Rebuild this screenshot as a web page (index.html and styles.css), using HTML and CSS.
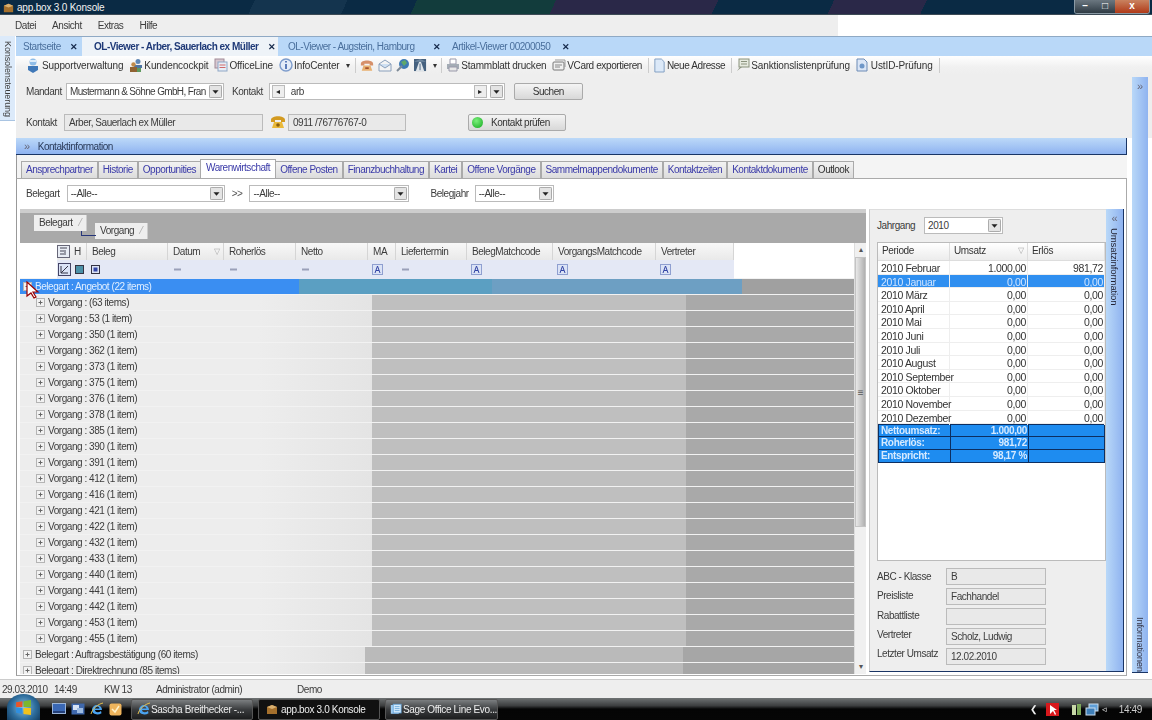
FILE: index.html
```html
<!doctype html>
<html lang="de">
<head>
  <meta charset="UTF-8">
  <title>app.box 3.0 Konsole</title>
  <link rel="stylesheet" href="styles.css">
</head>
<body>
  <svg class="defs" width="0" height="0">
    <symbol id="box" viewBox="0 0 14 14"><path d="M2 5l5-2 5 2v7H2z" fill="#a5702c"/><path d="M2 5l5 2 5-2-5-2z" fill="#d9b070"/></symbol>
    <symbol id="plus" viewBox="0 0 9 9"><rect x=".5" y=".5" width="8" height="8" fill="#f2f2f2" stroke="#b4b4b4"/><path d="M2.500 4.500h4M4.500 2.500v4" stroke="#666"/></symbol>
    <symbol id="down" viewBox="0 0 15 15"><rect x=".5" y=".5" width="14" height="14" rx="1" fill="#e4e4e4" stroke="#9a9a9a"/><path d="M4 6h7l-3.500 4z" fill="#222"/></symbol>
    <symbol id="filter-a" viewBox="0 0 11 11"><rect x=".5" y=".5" width="10" height="10" fill="#dbe3f6" stroke="#8f9fd0"/><path d="M3 9l2.500-7L8 9M4 6.500h3" fill="none" stroke="#3345a5"/></symbol>
    <symbol id="filter-eq" viewBox="0 0 11 11"><path d="M2 4.500h7v2H2z" fill="#9aa0b8"/></symbol>
    <symbol id="phone" viewBox="0 0 16 14"><path d="M1 5c0-5 14-5 14 0v2h-4V5H5v2H1z" fill="#d39a20"/><path d="M4 7h8l2 6H2z" fill="#eab93a"/><circle cx="8" cy="10" r="1.800" fill="#8a5f10"/></symbol>
    <symbol id="phone-red" viewBox="0 0 16 14"><path d="M1 5c0-5 14-5 14 0v2h-4V5H5v2H1z" fill="#d6906a"/><path d="M4 7h8l2 6H2z" fill="#e8b070"/><path d="M6 9h4v2H6z" fill="#a5502c"/></symbol>
    <symbol id="doc" viewBox="0 0 14 16"><path d="M2 1h7l3 3v11H2z" fill="#dce9f8" stroke="#7d9cc0"/></symbol>
    <symbol id="print" viewBox="0 0 14 14"><path d="M4 1h6v5H4z" fill="#fff" stroke="#99a"/><path d="M1 6h12v5H1z" fill="#a4acb5"/><path d="M3 9h8v4H3z" fill="#e8e8e8" stroke="#99a"/></symbol>
    <symbol id="support" viewBox="0 0 12 15"><circle cx="6" cy="4" r="3.500" fill="#8fbde8"/><path d="M1 8h10v4l-5 3-5-3z" fill="#3f78b8"/><path d="M3 2h6v2H3z" fill="#dcecfa"/></symbol>
    <symbol id="cockpit" viewBox="0 0 14 14"><circle cx="9" cy="3.500" r="2.500" fill="#5f86b5"/><path d="M5 7h8v3H5z" fill="#4c74a4"/><circle cx="4.500" cy="6.500" r="2.200" fill="#c08a4a"/><path d="M1 9h7v5H1z" fill="#8f6232"/><path d="M8 10h4v4H8z" fill="#5f9a5f"/></symbol>
    <symbol id="office" viewBox="0 0 14 14"><rect x="1" y="1" width="9" height="9" fill="#d9c8d0" stroke="#a08a98"/><rect x="4" y="4" width="9" height="9" fill="#e8eef6" stroke="#8fa7c6"/><path d="M5.500 7h6M5.500 9.500h6" stroke="#d06a6a"/></symbol>
    <symbol id="info" viewBox="0 0 14 14"><circle cx="7" cy="7" r="6" fill="#e4ecf8" stroke="#7d9ccc" stroke-width="1.400"/><path d="M7 3v1.500M7 6v5" stroke="#3a5fa8" stroke-width="1.600"/></symbol>
    <symbol id="mail" viewBox="0 0 14 13"><path d="M1 5l6-4 6 4v7H1z" fill="#f4f4f4" stroke="#8aa0bc"/><path d="M1 5l6 4 6-4" fill="#cfe0f2" stroke="#8aa0bc"/></symbol>
    <symbol id="globe" viewBox="0 0 14 14"><circle cx="8" cy="6" r="5" fill="#3d7ab5"/><path d="M5 4l4-2 2 3-3 3z" fill="#5fa86a"/><path d="M1 13l5-5" stroke="#7d8a96" stroke-width="2"/></symbol>
    <symbol id="road" viewBox="0 0 14 14"><rect width="13" height="13" fill="#45617f"/><path d="M5.500 3h2L11 13H2z" fill="#dfe5ea"/><path d="M6.500 5v7" stroke="#45617f"/><path d="M0 3l6.500-3L13 3" fill="#6f88a0"/></symbol>
    <symbol id="vcard" viewBox="0 0 14 12"><rect x="1" y="3" width="11" height="8" rx="1" fill="#efefef" stroke="#777"/><path d="M3 1h10v7" fill="none" stroke="#999"/><path d="M3 6h7M3 8h5" stroke="#888"/></symbol>
    <symbol id="speech" viewBox="0 0 14 14"><rect x="3" y="1" width="10" height="8" fill="#e6eadf" stroke="#8a927d"/><path d="M5 3.500h6M5 6h6" stroke="#8a927d"/><path d="M1 13l3-4h2z" fill="#8a927d"/></symbol>
    <symbol id="ust" viewBox="0 0 12 14"><path d="M1 1h7l3 3v9H1z" fill="#dbe6f6" stroke="#6c8bb5"/><circle cx="6" cy="8" r="2.500" fill="#6f97c8"/></symbol>
    <symbol id="ie" viewBox="0 0 14 14"><path d="M2 8a5 5 0 1 1 10 0H5c.3 2.500 3.500 3 6 1l.5 2.200C8 13.500 2 12.500 2 8zm3-1.500h4.500C9 3.800 5.500 3.800 5 6.500z" fill="#4aa3f0"/><path d="M1 12C2 7 8 2 13 1" fill="none" stroke="#e8c04a"/></symbol>
    <symbol id="screen" viewBox="0 0 14 12"><rect x=".5" y=".5" width="13" height="10" fill="#3a68b5" stroke="#9ab4d8"/><path d="M1 8h12v2H1z" fill="#233f78"/></symbol>
    <symbol id="windows" viewBox="0 0 14 12"><rect x=".5" y=".5" width="13" height="11" fill="#3f68ac"/><rect x="2" y="2" width="6" height="5" fill="#d7e3f4"/><rect x="6" y="5" width="6" height="5" fill="#9dbbe0"/></symbol>
    <symbol id="note" viewBox="0 0 13 13"><rect x=".5" y=".5" width="12" height="12" rx="2" fill="#eeb45c"/><path d="M3 6l3 3 4-6" fill="none" stroke="#fff1c8" stroke-width="1.500"/></symbol>
    <symbol id="sage" viewBox="0 0 15 14"><rect x="1" y="2" width="10" height="11" fill="#9fcdf2"/><rect x="4" y="1" width="10" height="11" fill="#d4ebfb" stroke="#5fa0d8"/><path d="M6 4h6M6 6.500h6M6 9h6" stroke="#5fa0d8"/></symbol>
    <symbol id="red-flag" viewBox="0 0 13 13"><rect width="13" height="13" fill="#d8181c"/><path d="M4 2v9l3-3 2 4 1-1-2-4h3z" fill="#fff"/></symbol>
    <symbol id="net" viewBox="0 0 14 13"><rect x="4" y="1" width="9" height="7" fill="#5f9fd8" stroke="#cde"/><rect x="1" y="5" width="9" height="7" fill="#3f7fb8" stroke="#cde"/></symbol>
    <symbol id="bat" viewBox="0 0 11 13"><rect x="1" y="2" width="4" height="10" fill="#c8d8a8"/><rect x="6" y="1" width="4" height="11" fill="#7da85a"/></symbol>
  </svg>

  <div class="titlebar">
    <svg class="title-icon" width="13" height="13"><use href="#box"/></svg>
    <span class="title-text">app.box 3.0 Konsole</span>
    <div class="win-btns">
      <span class="win-btn">&#8211;</span>
      <span class="win-btn">&#9633;</span>
      <span class="win-btn win-close">x</span>
    </div>
  </div>

  <div class="menubar">
    <div class="menu-items">
      <span>Datei</span><span>Ansicht</span><span>Extras</span><span>Hilfe</span>
    </div>
  </div>

  <div class="workspace">
    <div class="left-rail">
      <div class="rail-tab"><span>Konsolensteuerung</span></div>
    </div>

    <div class="center">
      <div class="doc-tabs">
        <div class="doc-tab dt-1"><span>Startseite</span><b>&#10005;</b></div>
        <div class="doc-tab dt-2 active"><span>OL-Viewer - Arber, Sauerlach ex Müller</span><b>&#10005;</b></div>
        <div class="doc-tab dt-3"><span>OL-Viewer - Augstein, Hamburg</span><b>&#10005;</b></div>
        <div class="doc-tab dt-4"><span>Artikel-Viewer 00200050</span><b>&#10005;</b></div>
      </div>

      <div class="toolbar">
        <span class="tool t-support"><svg width="12" height="15"><use href="#support"/></svg>Supportverwaltung</span>
        <span class="tool"><svg width="14" height="14"><use href="#cockpit"/></svg>Kundencockpit</span>
        <span class="tool"><svg width="14" height="14"><use href="#office"/></svg>OfficeLine</span>
        <span class="tool"><svg width="14" height="14"><use href="#info"/></svg>InfoCenter</span>
        <span class="caret">&#9662;</span>
        <span class="sep sep-tight"></span>
        <svg class="t-icon" width="14" height="13"><use href="#phone-red"/></svg>
        <svg class="t-icon" width="14" height="13"><use href="#mail"/></svg>
        <svg class="t-icon" width="14" height="14"><use href="#globe"/></svg>
        <svg class="t-icon" width="13" height="13"><use href="#road"/></svg>
        <span class="caret caret-2">&#9662;</span>
        <span class="sep"></span>
        <span class="tool t-print"><svg width="14" height="14"><use href="#print"/></svg>Stammblatt drucken</span>
        <span class="tool tool-narrow"><svg width="14" height="12"><use href="#vcard"/></svg>VCard exportieren</span>
        <span class="sep"></span>
        <span class="tool tool-narrow"><svg width="13" height="15"><use href="#doc"/></svg>Neue Adresse</span>
        <span class="sep"></span>
        <span class="tool"><svg width="14" height="14"><use href="#speech"/></svg>Sanktionslistenprüfung</span>
        <span class="tool t-ust"><svg width="12" height="14"><use href="#ust"/></svg>UstID-Prüfung</span>
        <span class="sep"></span>
      </div>

      <div class="form-area">
        <div class="form-row row-top">
          <span class="lbl lbl-mandant">Mandant</span>
          <div class="combo combo-mandant"><span>Mustermann &amp; Söhne GmbH, Fran</span><svg width="13" height="13"><use href="#down"/></svg></div>
          <span class="lbl lbl-kontakt">Kontakt</span>
          <div class="combo combo-kontakt">
            <span class="nav-btn">&#9666;</span>
            <span class="grow">arb</span>
            <span class="nav-btn">&#9656;</span>
            <svg width="13" height="13"><use href="#down"/></svg>
          </div>
          <button class="btn btn-suchen">Suchen</button>
        </div>
        <div class="form-row row-bottom">
          <span class="lbl lbl-kontakt2">Kontakt</span>
          <div class="field field-name">Arber, Sauerlach ex Müller</div>
          <svg class="phone" width="16" height="14"><use href="#phone"/></svg>
          <div class="field field-tel">0911 /76776767-0</div>
          <button class="btn btn-pruefen"><i class="led"></i>Kontakt prüfen</button>
        </div>
      </div>

      <div class="section-bar"><span class="chev">&#187;</span>Kontaktinformation</div>

      <div class="sub-tabs">
        <span class="sub-tab">Ansprechpartner</span>
        <span class="sub-tab">Historie</span>
        <span class="sub-tab">Opportunities</span>
        <span class="sub-tab active">Warenwirtschaft</span>
        <span class="sub-tab">Offene Posten</span>
        <span class="sub-tab">Finanzbuchhaltung</span>
        <span class="sub-tab">Kartei</span>
        <span class="sub-tab">Offene Vorgänge</span>
        <span class="sub-tab">Sammelmappendokumente</span>
        <span class="sub-tab">Kontaktzeiten</span>
        <span class="sub-tab">Kontaktdokumente</span>
        <span class="sub-tab dark">Outlook</span>
      </div>

      <div class="tab-page">
        <div class="filter-row">
          <span class="lbl">Belegart</span>
          <div class="combo combo-filter"><span>--Alle--</span><svg width="13" height="13"><use href="#down"/></svg></div>
          <span class="lbl gg">&gt;&gt;</span>
          <div class="combo combo-filter2"><span>--Alle--</span><svg width="13" height="13"><use href="#down"/></svg></div>
          <span class="lbl lbl-jahr">Belegjahr</span>
          <div class="combo combo-jahr"><span>--Alle--</span><svg width="13" height="13"><use href="#down"/></svg></div>
        </div>

        <div class="page-body">
          <div class="grid-panel">
            <div class="group-box">
              <span class="chip chip-1">Belegart<em>&#8260;</em></span>
              <span class="chip chip-2">Vorgang<em>&#8260;</em></span>
            </div>
            <div class="grid-wrap">
              <div class="grid-main">
                <div class="grid-head">
                  <div class="hcell hcell-icon">
                    <svg width="13" height="13" viewBox="0 0 13 13"><rect x=".5" y=".5" width="12" height="12" fill="#e8ecf4" stroke="#667"/><path d="M3 3h7M3 6h4M3 9h4M8 5v5" stroke="#445"/></svg>
                    <span>H</span>
                  </div>
                  <div class="hcell w81">Beleg</div>
                  <div class="hcell w56">Datum<em>&#9661;</em></div>
                  <div class="hcell w72">Roherlös</div>
                  <div class="hcell w72">Netto</div>
                  <div class="hcell w28">MA</div>
                  <div class="hcell w71">Liefertermin</div>
                  <div class="hcell w86">BelegMatchcode</div>
                  <div class="hcell w103">VorgangsMatchcode</div>
                  <div class="hcell w78">Vertreter</div>
                </div>
                <div class="grid-filter">
                  <div class="fcell hcell-icon">
                    <svg width="13" height="13" viewBox="0 0 13 13"><rect x=".5" y=".5" width="12" height="12" fill="#dbe3f6" stroke="#446"/><path d="M3 10l7-7M3 3v7h7" fill="none" stroke="#334"/></svg>
                    <i class="sq"></i>
                  </div>
                  <div class="fcell w81"><i class="sq sq-blue"></i></div>
                  <div class="fcell w56"><svg width="11" height="11"><use href="#filter-eq"/></svg></div>
                  <div class="fcell w72"><svg width="11" height="11"><use href="#filter-eq"/></svg></div>
                  <div class="fcell w72"><svg width="11" height="11"><use href="#filter-eq"/></svg></div>
                  <div class="fcell w28"><svg width="11" height="11"><use href="#filter-a"/></svg></div>
                  <div class="fcell w71"><svg width="11" height="11"><use href="#filter-eq"/></svg></div>
                  <div class="fcell w86"><svg width="11" height="11"><use href="#filter-a"/></svg></div>
                  <div class="fcell w103"><svg width="11" height="11"><use href="#filter-a"/></svg></div>
                  <div class="fcell w78"><svg width="11" height="11"><use href="#filter-a"/></svg></div>
                </div>

                <div class="rows">
                  <div class="row row-open">
                    <svg width="9" height="9"><use href="#plus"/></svg><span>Belegart : Angebot (22 items)</span>
                    <svg class="cursor" width="14" height="18" viewBox="0 0 14 18"><path d="M1 1v14l4-3 3 5 2-1-3-5h5z" fill="#fff" stroke="#900" stroke-width="1.200"/></svg>
                  </div>
                  <div class="row sub"><svg width="9" height="9"><use href="#plus"/></svg><span>Vorgang :  (63 items)</span></div>
                  <div class="row sub"><svg width="9" height="9"><use href="#plus"/></svg><span>Vorgang : 53 (1 item)</span></div>
                  <div class="row sub"><svg width="9" height="9"><use href="#plus"/></svg><span>Vorgang : 350 (1 item)</span></div>
                  <div class="row sub"><svg width="9" height="9"><use href="#plus"/></svg><span>Vorgang : 362 (1 item)</span></div>
                  <div class="row sub"><svg width="9" height="9"><use href="#plus"/></svg><span>Vorgang : 373 (1 item)</span></div>
                  <div class="row sub"><svg width="9" height="9"><use href="#plus"/></svg><span>Vorgang : 375 (1 item)</span></div>
                  <div class="row sub"><svg width="9" height="9"><use href="#plus"/></svg><span>Vorgang : 376 (1 item)</span></div>
                  <div class="row sub"><svg width="9" height="9"><use href="#plus"/></svg><span>Vorgang : 378 (1 item)</span></div>
                  <div class="row sub"><svg width="9" height="9"><use href="#plus"/></svg><span>Vorgang : 385 (1 item)</span></div>
                  <div class="row sub"><svg width="9" height="9"><use href="#plus"/></svg><span>Vorgang : 390 (1 item)</span></div>
                  <div class="row sub"><svg width="9" height="9"><use href="#plus"/></svg><span>Vorgang : 391 (1 item)</span></div>
                  <div class="row sub"><svg width="9" height="9"><use href="#plus"/></svg><span>Vorgang : 412 (1 item)</span></div>
                  <div class="row sub"><svg width="9" height="9"><use href="#plus"/></svg><span>Vorgang : 416 (1 item)</span></div>
                  <div class="row sub"><svg width="9" height="9"><use href="#plus"/></svg><span>Vorgang : 421 (1 item)</span></div>
                  <div class="row sub"><svg width="9" height="9"><use href="#plus"/></svg><span>Vorgang : 422 (1 item)</span></div>
                  <div class="row sub"><svg width="9" height="9"><use href="#plus"/></svg><span>Vorgang : 432 (1 item)</span></div>
                  <div class="row sub"><svg width="9" height="9"><use href="#plus"/></svg><span>Vorgang : 433 (1 item)</span></div>
                  <div class="row sub"><svg width="9" height="9"><use href="#plus"/></svg><span>Vorgang : 440 (1 item)</span></div>
                  <div class="row sub"><svg width="9" height="9"><use href="#plus"/></svg><span>Vorgang : 441 (1 item)</span></div>
                  <div class="row sub"><svg width="9" height="9"><use href="#plus"/></svg><span>Vorgang : 442 (1 item)</span></div>
                  <div class="row sub"><svg width="9" height="9"><use href="#plus"/></svg><span>Vorgang : 453 (1 item)</span></div>
                  <div class="row sub"><svg width="9" height="9"><use href="#plus"/></svg><span>Vorgang : 455 (1 item)</span></div>
                  <div class="row group"><svg width="9" height="9"><use href="#plus"/></svg><span>Belegart : Auftragsbestätigung (60 items)</span></div>
                  <div class="row group"><svg width="9" height="9"><use href="#plus"/></svg><span>Belegart : Direktrechnung (85 items)</span></div>
                </div>
              </div>
              <div class="scrollbar">
                <span class="sb-arrow">&#9652;</span>
                <div class="sb-thumb"><span class="sb-grip">&#8801;</span></div>
                <div class="sb-track"></div>
                <span class="sb-arrow">&#9662;</span>
              </div>
            </div>
          </div>

          <div class="info-panel">
            <div class="jahr-row">
              <span class="lbl">Jahrgang</span>
              <div class="combo combo-year"><span>2010</span><svg width="13" height="13"><use href="#down"/></svg></div>
            </div>
            <div class="umsatz">
              <div class="u-row u-head"><span>Periode</span><span class="u-left">Umsatz<em>&#9661;</em></span><span class="u-left">Erlös</span></div>
              <div class="u-row"><span>2010 Februar</span><span>1.000,00</span><span>981,72</span></div>
              <div class="u-row u-sel"><span>2010 Januar</span><span>0,00</span><span>0,00</span></div>
              <div class="u-row"><span>2010 März</span><span>0,00</span><span>0,00</span></div>
              <div class="u-row"><span>2010 April</span><span>0,00</span><span>0,00</span></div>
              <div class="u-row"><span>2010 Mai</span><span>0,00</span><span>0,00</span></div>
              <div class="u-row"><span>2010 Juni</span><span>0,00</span><span>0,00</span></div>
              <div class="u-row"><span>2010 Juli</span><span>0,00</span><span>0,00</span></div>
              <div class="u-row"><span>2010 August</span><span>0,00</span><span>0,00</span></div>
              <div class="u-row"><span>2010 September</span><span>0,00</span><span>0,00</span></div>
              <div class="u-row"><span>2010 Oktober</span><span>0,00</span><span>0,00</span></div>
              <div class="u-row"><span>2010 November</span><span>0,00</span><span>0,00</span></div>
              <div class="u-row"><span>2010 Dezember</span><span>0,00</span><span>0,00</span></div>
              <div class="u-sum">
                <div class="s-row"><span>Nettoumsatz:</span><span>1.000,00</span><span></span></div>
                <div class="s-row"><span>Roherlös:</span><span>981,72</span><span></span></div>
                <div class="s-row"><span>Entspricht:</span><span>98,17 %</span><span></span></div>
              </div>
            </div>
            <div class="info-form">
              <div class="i-row"><span>ABC - Klasse</span><div class="field">B</div></div>
              <div class="i-row"><span>Preisliste</span><div class="field">Fachhandel</div></div>
              <div class="i-row"><span>Rabattliste</span><div class="field"></div></div>
              <div class="i-row"><span>Vertreter</span><div class="field">Scholz, Ludwig</div></div>
              <div class="i-row"><span>Letzter Umsatz</span><div class="field">12.02.2010</div></div>
            </div>
          </div>

          <div class="inner-rail">
            <span class="chev">&#171;</span>
            <span class="v-text">Umsatzinformation</span>
          </div>
        </div>
      </div>
    </div>

    <div class="right-rail">
      <span class="chev">&#187;</span>
      <span class="v-text">Informationen</span>
    </div>
  </div>

  <div class="statusbar">
    <span class="st-date">29.03.2010</span>
    <span class="st-time">14:49</span>
    <span class="st-kw">KW 13</span>
    <span class="st-user">Administrator (admin)</span>
    <span>Demo</span>
  </div>

  <div class="taskbar">
    <div class="orb">
      <svg width="17" height="17" viewBox="0 0 16 16"><path d="M1 3l6-1v5.500H1z" fill="#e8562a"/><path d="M8 2l7-1v6.500H8z" fill="#7cb82e"/><path d="M1 8.500h6V14l-6-1z" fill="#2f8fe0"/><path d="M8 8.500h7V15l-7-1z" fill="#f2c21c"/></svg>
    </div>
    <div class="quick">
      <svg width="14" height="12"><use href="#screen"/></svg>
      <svg width="14" height="12"><use href="#windows"/></svg>
      <svg width="14" height="14"><use href="#ie"/></svg>
      <svg width="13" height="13"><use href="#note"/></svg>
    </div>
    <div class="task task-ie"><svg width="14" height="14"><use href="#ie"/></svg>Sascha Breithecker -...</div>
    <div class="task task-on"><svg width="14" height="14"><use href="#box"/></svg>app.box 3.0 Konsole</div>
    <div class="task task-sage"><svg width="15" height="14"><use href="#sage"/></svg>Sage Office Line Evo...</div>
    <div class="tray">
      <span class="tray-chev">&#10094;</span>
      <svg class="t-red" width="13" height="13"><use href="#red-flag"/></svg>
      <svg width="11" height="13"><use href="#bat"/></svg>
      <svg width="14" height="13"><use href="#net"/></svg>
      <span class="t-vol">&#9667;</span>
      <span class="clock">14:49</span>
    </div>
  </div>
</body>
</html>
```

FILE: styles.css
```css
* {
  box-sizing: border-box;
}

html, body {
  margin: 0;
  padding: 0;
}

body {
  width: 1152px;
  height: 720px;
  overflow: hidden;
  display: flex;
  flex-direction: column;
  background-color: #fff;
  color: #3c3c3c;
  font-family: "Liberation Sans", Arial, sans-serif;
  font-size: 10px;
  letter-spacing: -.45px;
  white-space: nowrap;
  filter: blur(.3px);
}

.defs {
  position: absolute;
}

em {
  font-style: normal;
  color: #aaa;
}

/* window chrome */
.titlebar {
  flex: 0 0 15px;
  display: flex;
  align-items: center;
  padding-left: 2px;
  border-bottom: 1px solid #3c4a55;
  background-color: #0a2a44;
  background-image: linear-gradient(115deg, #0a2a44 0 22%, #14344e 22% 30%, #0a2a44 30% 36%, #123c3c 36% 48%, #2a2848 48% 62%, #0a2a44 62% 72%, #2a2848 72% 80%, #0a2a44 80%);
  color: #f2f2f2;
  letter-spacing: -.2px;
}

.title-text {
  margin-left: 2px;
}

.win-btns {
  margin-left: auto;
  margin-right: 2px;
  display: flex;
  height: 14px;
  border: 1px solid #8a9aa5;
  border-top: 0;
  border-radius: 0 0 3px 3px;
  overflow: hidden;
}

.win-btn {
  width: 20px;
  text-align: center;
  line-height: 11px;
  color: #fff;
  background: linear-gradient(#6b7780, #2f3b44);
  font-weight: bold;
}

.win-close {
  width: 34px;
  background: linear-gradient(#c9825f, #b03a18);
}

.menubar {
  flex: 0 0 21px;
  background: linear-gradient(90deg, #eee 0 838px, #fff 838px);
  display: flex;
  align-items: center;
}

.menu-items {
  display: flex;
  gap: 16px;
  padding-left: 15px;
}

/* main area */
.workspace {
  flex: 1;
  display: flex;
  min-height: 0;
}

.left-rail {
  flex: 0 0 16px;
}

.rail-tab {
  width: 15px;
  height: 85px;
  background: #dceafa;
  border-bottom: 1px solid #a9c4e2;
  display: flex;
  justify-content: center;
  padding-top: 5px;
  font-size: 9px;
  letter-spacing: -.1px;
}

.rail-tab span,
.v-text {
  writing-mode: vertical-rl;
}

.center {
  flex: 0 0 1111px;
  display: flex;
  flex-direction: column;
  min-width: 0;
}

.doc-tabs {
  flex: 0 0 20px;
  display: flex;
  background: #b9d8f8;
  border-top: 1px solid #8fa9c4;
  margin-right: -26px;
}

.doc-tab {
  display: flex;
  align-items: center;
  justify-content: space-between;
  padding: 0 4px 0 7px;
  color: #4a6f9c;
}

.dt-1 { width: 66px; }
.dt-2 { width: 196px; }
.dt-3 { width: 166px; padding-left: 10px; letter-spacing: -.5px; }
.dt-4 { width: 130px; padding-left: 8px; }

.doc-tab b {
  color: #14284a;
  font-size: 9px;
}

.doc-tab.active {
  background: #eef3f8;
  color: #1f3a78;
  font-weight: bold;
  padding-left: 12px;
  padding-right: 3px;
  letter-spacing: -.5px;
}

.toolbar {
  flex: 0 0 18px;
  display: flex;
  align-items: center;
  padding-left: 11px;
  background: linear-gradient(#fff, #f1f1f1 60%, #eee);
  margin-right: -26px;
  letter-spacing: -.12px;
  color: #333;
}

.tool {
  display: inline-flex;
  align-items: center;
  gap: 1px;
  margin-right: 6px;
}

.t-support { gap: 3px; }
.t-ust { gap: 3px; }
.t-print { letter-spacing: -.22px; }

.tool-narrow {
  letter-spacing: -.38px;
}

.t-icon {
  margin-left: 4px;
}

.caret {
  font-size: 8px;
  margin: 0 6px 0 0;
}

.caret-2 {
  margin: 0 4px 0 6px;
}

.sep {
  width: 1px;
  height: 15px;
  background: #ccc;
  margin-right: 4px;
}

.sep-tight {
  margin-right: 0;
}

.form-area {
  flex: 0 0 64px;
  background: #eee;
  margin-right: -26px;
  padding: 0 0 0 10px;
}

.form-row {
  display: flex;
  align-items: center;
}

.row-top {
  height: 35px;
  padding-bottom: 1px;
}

.row-bottom {
  height: 26px;
}

.lbl-mandant {
  width: 40px;
}

.lbl-kontakt {
  margin: 0 6px 0 8px;
}

.lbl-kontakt2 {
  width: 38px;
}

.combo {
  display: flex;
  align-items: center;
  justify-content: space-between;
  height: 17px;
  padding: 0 1px 0 3px;
  border: 1px solid #bbb;
  background: #fff;
  overflow: hidden;
}

.combo-mandant {
  width: 158px;
  letter-spacing: -.65px;
}

.combo-kontakt {
  width: 236px;
  padding-left: 2px;
  gap: 3px;
}

.grow {
  flex: 1;
  margin-left: 3px;
}

.nav-btn {
  width: 13px;
  height: 13px;
  border: 1px solid #bbb;
  background: #eee;
  font-size: 8px;
  line-height: 11px;
  text-align: center;
  color: #222;
}

.btn {
  height: 17px;
  border: 1px solid #aaa;
  border-radius: 2px;
  background: linear-gradient(#f4f4f4, #d8d8d8);
  color: #333;
  font: inherit;
  letter-spacing: inherit;
  padding: 0;
}

.btn-suchen {
  width: 69px;
  margin-left: 9px;
}

.btn-pruefen {
  width: 98px;
  margin-left: 62px;
  display: flex;
  align-items: center;
  padding-left: 3px;
  gap: 8px;
}

.led {
  width: 11px;
  height: 11px;
  border-radius: 50%;
  background: radial-gradient(circle at 40% 35%, #7cf07c, #12a81e);
}

.field {
  height: 17px;
  line-height: 15px;
  padding-left: 4px;
  border: 1px solid #bbb;
  background: #e9e9e9;
}

.field-name {
  width: 199px;
}

.phone {
  margin: 0 2px 0 7px;
}

.field-tel {
  width: 118px;
}

.section-bar {
  flex: 0 0 17px;
  display: flex;
  align-items: center;
  gap: 8px;
  padding-left: 8px;
  color: #2a3a58;
  background: linear-gradient(#bcd9f8, #8fb3f0);
  border-bottom: 1px solid #1a3565;
  border-right: 1px solid #1a3565;
}

.chev {
  color: #667;
  font-size: 11px;
  line-height: 12px;
}

.sub-tabs {
  flex: 0 0 23px;
  display: flex;
  align-items: flex-end;
  padding-left: 4px;
  background: #f4f4f4;
  border-left: 1px solid #999;
  letter-spacing: -.48px;
}

.sub-tab {
  height: 17px;
  line-height: 16px;
  padding: 0 4px;
  color: #3a3aa8;
  background: linear-gradient(#f2f2f2, #dcdcdc);
  border: 1px solid #aaa;
  border-bottom: 0;
}

.sub-tab.active {
  height: 19px;
  padding: 0 5px;
  background: #fff;
  margin: 0 -1px;
  position: relative;
}

.sub-tab.dark {
  color: #333;
}

.tab-page {
  flex: 1;
  min-height: 0;
  display: flex;
  flex-direction: column;
  border-left: 1px solid #999;
  border-right: 1px solid #aaa;
  border-bottom: 1px solid #aaa;
  border-top: 1px solid #aaa;
  background: #fff;
  margin-bottom: 3px;
}

.filter-row {
  flex: 0 0 29px;
  display: flex;
  align-items: center;
  padding: 0 0 0 9px;
}

.combo-filter {
  width: 158px;
  margin-left: 7px;
}

.gg {
  margin: 0 7px;
  color: #555;
}

.combo-filter2 {
  width: 160px;
}

.lbl-jahr {
  margin-left: 21px;
  margin-right: 6px;
}

.combo-jahr {
  width: 79px;
}

.page-body {
  flex: 1;
  min-height: 0;
  display: flex;
  padding: 1px 0 1px 3px;
}

/* data grid */
.grid-panel {
  flex: 0 0 846px;
  display: flex;
  flex-direction: column;
  min-height: 0;
}

.group-box {
  flex: 0 0 34px;
  display: flex;
  align-items: flex-start;
  background: #a9a9a9;
  border-top: 4px solid #cdcdcd;
  padding: 2px 0 0 14px;
}

.chip {
  display: flex;
  justify-content: space-between;
  height: 16px;
  line-height: 15px;
  padding: 0 5px;
  background: #eee;
  border-right: 1px solid #ccc;
  position: relative;
}

.chip-1 {
  width: 53px;
}

.chip-2 {
  width: 53px;
  margin: 8px 0 0 8px;
}

/* link between the two grouped columns */
.chip-2::before {
  content: "";
  position: absolute;
  left: -14px;
  top: 8px;
  width: 14px;
  height: 4px;
  border-left: 1px solid #26357a;
  border-bottom: 1px solid #26357a;
}

.grid-wrap {
  flex: 1;
  min-height: 0;
  display: flex;
}

.grid-main {
  flex: 1;
  min-width: 0;
  overflow: hidden;
}

.grid-head,
.grid-filter {
  display: flex;
  padding-left: 37px;
  height: 17px;
}

.grid-head {
  background: #fff;
}

.grid-filter {
  height: 19px;
  background: linear-gradient(#fff 0 18px, #f2f2f2 18px);
}

.hcell,
.fcell {
  display: flex;
  align-items: center;
  justify-content: space-between;
  padding-left: 5px;
  border-right: 1px solid #d5d5d5;
  background: linear-gradient(#f8f8f8, #e9e9e9);
}

.fcell {
  justify-content: flex-start;
  background: #e4e8f5;
  padding-left: 3px;
  border-right: 0;
  border-left: 1px solid transparent;
}

.hcell em {
  margin-right: 3px;
  font-size: 8px;
}

.hcell-icon {
  width: 30px;
  padding-left: 0;
  gap: 4px;
  justify-content: flex-start;
}

.w81 { width: 81px; }
.w56 { width: 56px; }
.w72 { width: 72px; }
.w28 { width: 28px; }
.w71 { width: 71px; }
.w86 { width: 86px; }
.w103 { width: 103px; }
.w78 { width: 78px; }

.sq {
  width: 9px;
  height: 9px;
  background: #4a90a8;
  border: 1px solid #334;
}

.sq-blue {
  background: #dbe3f6;
  box-shadow: inset 0 0 0 1.5px #dbe3f6, inset 0 0 0 5px #3345a5;
}

.rows {
  display: flex;
  flex-direction: column;
}

.row {
  flex: 0 0 16px;
  height: 16px;
  display: flex;
  align-items: center;
  gap: 3px;
  padding-left: 3px;
  border-bottom: 1px solid #f2f2f2;
  background: linear-gradient(90deg, #ededed 0 238px, #e4e4e4 352px, #bfbfbf 352px 666px, #a9a9a9 666px);
}

.row.sub {
  padding-left: 16px;
}

.row.group {
  background: linear-gradient(90deg, #ededed 0 238px, #e2e2e2 345px, #bababa 345px 663px, #a6a6a6 663px);
}

.row-open {
  position: relative;
  color: #dfeeff;
  background: linear-gradient(90deg, #3a8ef2 0 279px, #5b9fc2 279px 472px, #6d9fc3 472px 722px, #a0a0a0 722px);
}

.cursor {
  position: absolute;
  left: 6px;
  top: 2px;
}

.scrollbar {
  flex: 0 0 12px;
  display: flex;
  flex-direction: column;
  align-items: center;
  background: #f0f0f0;
  border-left: 1px solid #ddd;
  color: #555;
  font-size: 8px;
}

.sb-arrow {
  height: 14px;
  line-height: 14px;
}

.sb-thumb {
  flex: 0 0 270px;
  width: 100%;
  display: flex;
  align-items: center;
  justify-content: center;
  background: linear-gradient(90deg, #e8e8e8, #b0b0b0);
  border: 1px solid #c4c4c4;
  font-size: 10px;
}

.sb-track {
  flex: 1;
}

/* right info panel */
.info-panel {
  flex: 0 0 237px;
  display: flex;
  flex-direction: column;
  background: #eee;
  border-left: 1px solid #ccc;
  padding: 0 0 0 7px;
  margin-left: 3px;
  border-bottom: 1px solid #1a3565;
  border-top: 1px solid #ddd;
  margin-bottom: 2px;
}

.jahr-row {
  flex: 0 0 32px;
  display: flex;
  align-items: center;
  gap: 9px;
  padding-bottom: 1px;
}

.combo-year {
  width: 79px;
}

.umsatz {
  flex: 0 0 319px;
  width: 229px;
  background: #fff;
  border: 1px solid #bbb;
}

.u-row,
.s-row {
  display: grid;
  grid-template-columns: 72px 78px 77px;
  height: 13.6px;
  line-height: 14px;
  letter-spacing: -.35px;
  font-size: 10.5px;
}

.u-row {
  border-bottom: 1px solid #eee;
  color: #333;
}

.u-row span {
  padding: 0 1px 0 3px;
  text-align: right;
  border-right: 1px solid #eee;
}

.u-row span:first-child,
.s-row span:first-child,
.u-left {
  text-align: left;
}

.u-head {
  height: 18px;
  line-height: 16px;
  font-size: 10px;
  background: linear-gradient(#fff, #ececec);
  border-bottom: 1px solid #ddd;
}

.u-head span {
  padding-left: 4px;
  border-right: 1px solid #ddd;
}

.u-left {
  display: flex;
  justify-content: space-between;
}

.u-left em {
  font-size: 8px;
  margin-right: 2px;
}

.u-sel {
  background: #2f8ff0;
  color: #cfe4ff;
}

.u-sum {
  background: #1e8cf0;
  border: 1px solid #0c2f62;
  color: #d6eaff;
  font-weight: bold;
}

.s-row {
  height: 12.3px;
  line-height: 12px;
  font-size: 10px;
  border-bottom: 1px solid #0c2f62;
}

.s-row:last-child {
  border-bottom: 0;
}

.s-row span {
  text-align: right;
  padding: 0 1px 0 2px;
  border-right: 1px solid #0c2f62;
}

.s-row span:last-child {
  border-right: 0;
}

.info-form {
  flex: 1;
  padding-top: 5px;
}

.i-row {
  display: flex;
  align-items: center;
  height: 20px;
}

.i-row span {
  width: 69px;
}

.i-row:nth-child(2) span,
.i-row:nth-child(3) span { margin-bottom: 2px; }
.i-row:nth-child(4) span { margin-bottom: 4px; }
.i-row:nth-child(5) span { margin-bottom: 6px; }

.i-row .field {
  width: 100px;
  padding-left: 4px;
}

.inner-rail {
  flex: 0 0 18px;
  display: flex;
  flex-direction: column;
  align-items: center;
  background: linear-gradient(90deg, #b9d8f8, #8fb3f0);
  border-bottom: 1px solid #1a3565;
  border-right: 1px solid #1a3565;
  padding-top: 3px;
  gap: 4px;
  font-size: 9.500px;
  letter-spacing: -.1px;
  color: #223;
  margin-bottom: 2px;
}

.right-rail {
  flex: 0 0 16px;
  margin-left: 5px;
  margin-top: 41px;
  margin-bottom: 6px;
  display: flex;
  flex-direction: column;
  align-items: center;
  justify-content: space-between;
  background: linear-gradient(90deg, #b9d8f8, #8fb3f0);
  border-bottom: 1px solid #1a3565;
  padding: 3px 0 0;
  font-size: 9.500px;
  letter-spacing: -.25px;
  color: #334;
}

/* status + taskbar */
.statusbar {
  flex: 0 0 19px;
  display: flex;
  align-items: center;
  padding-left: 2px;
  background: #eee;
  border-top: 1px solid #ccc;
}

.st-date { width: 52px; }
.st-time { width: 50px; }
.st-kw { width: 52px; }
.st-user { width: 141px; }

.taskbar {
  flex: 0 0 22px;
  display: flex;
  align-items: center;
  position: relative;
  background: linear-gradient(#6e7273 0, #3c3e3f 35%, #050505 50%, #060606 100%);
  color: #eee;
  letter-spacing: -.35px;
}

.orb {
  position: absolute;
  left: 7px;
  bottom: -1px;
  width: 33px;
  height: 27px;
  border-radius: 50% 50% 0 0;
  display: flex;
  align-items: center;
  justify-content: center;
  background: radial-gradient(circle, #8fc2e0 0, #2f6f9f 55%, #123a5c 100%);
}

.quick {
  display: flex;
  align-items: center;
  gap: 5px;
  margin-left: 52px;
  width: 79px;
}

.task {
  width: 122px;
  height: 21px;
  margin-right: 5px;
  display: flex;
  align-items: center;
  border: 1px solid #555;
  border-radius: 2px;
  background: linear-gradient(#7b7e80, #3a3c3e 50%, #1d1e1f);
  overflow: hidden;
}

.task-ie {
  padding-left: 5px;
}

.task-on {
  background: #111;
  padding-left: 6px;
  gap: 2px;
}

.task-sage {
  width: 113px;
  padding-left: 4px;
  gap: 1px;
}

.tray {
  margin-left: auto;
  display: flex;
  align-items: center;
  gap: 3px;
}

.tray-chev {
  font-size: 9px;
  margin-right: 5px;
}

.t-red {
  margin-right: 9px;
}

.t-vol {
  font-size: 9px;
  margin-right: 9px;
}

.clock {
  color: #ccc;
  margin-right: 10px;
}
```
